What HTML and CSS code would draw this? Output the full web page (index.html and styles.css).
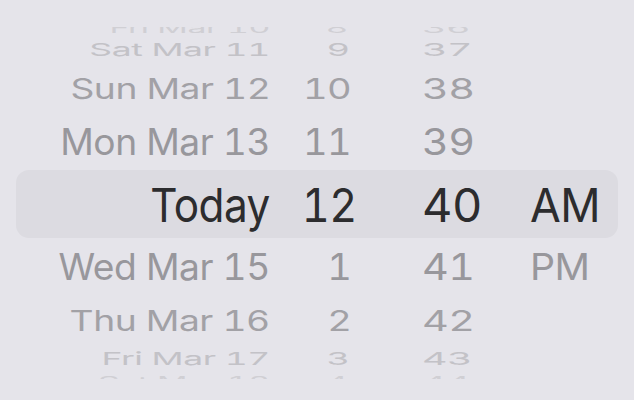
FILE: index.html
```html
<!DOCTYPE html>
<html lang="en">
<head>
    <meta charset="UTF-8">
    <meta name="viewport" content="width=device-width, initial-scale=1.0">
    <title>Date Picker</title>
    <link rel="stylesheet" href="styles.css">
</head>
<body>
    <div class="picker">
        <div class="wheel">
            <div class="row r4">
                <div class="cell date"><span>Fri Mar 10</span></div>
                <div class="cell hour"><span>8</span></div>
                <div class="cell minute"><span>36</span></div>
                <div class="cell period"></div>
            </div>
            <div class="row r3">
                <div class="cell date"><span>Sat Mar 11</span></div>
                <div class="cell hour"><span>9</span></div>
                <div class="cell minute"><span>37</span></div>
                <div class="cell period"></div>
            </div>
            <div class="row r2">
                <div class="cell date"><span>Sun Mar 12</span></div>
                <div class="cell hour"><span>10</span></div>
                <div class="cell minute"><span>38</span></div>
                <div class="cell period"></div>
            </div>
            <div class="row r1">
                <div class="cell date"><span>Mon Mar 13</span></div>
                <div class="cell hour"><span>11</span></div>
                <div class="cell minute"><span>39</span></div>
                <div class="cell period"></div>
            </div>
            <div class="row r0 selected">
                <div class="cell date"><span>Today</span></div>
                <div class="cell hour"><span>12</span></div>
                <div class="cell minute"><span>40</span></div>
                <div class="cell period"><span>AM</span></div>
            </div>
            <div class="row r1">
                <div class="cell date"><span>Wed Mar 15</span></div>
                <div class="cell hour"><span>1</span></div>
                <div class="cell minute"><span>41</span></div>
                <div class="cell period"><span>PM</span></div>
            </div>
            <div class="row r2">
                <div class="cell date"><span>Thu Mar 16</span></div>
                <div class="cell hour"><span>2</span></div>
                <div class="cell minute"><span>42</span></div>
                <div class="cell period"></div>
            </div>
            <div class="row r3">
                <div class="cell date"><span>Fri Mar 17</span></div>
                <div class="cell hour"><span>3</span></div>
                <div class="cell minute"><span>43</span></div>
                <div class="cell period"></div>
            </div>
            <div class="row r4">
                <div class="cell date"><span>Sat Mar 18</span></div>
                <div class="cell hour"><span>4</span></div>
                <div class="cell minute"><span>44</span></div>
                <div class="cell period"></div>
            </div>
        </div>
    </div>
</body>
</html>
```

FILE: styles.css
```css
html, body {
    margin: 0;
    padding: 0;
    background-color: #e5e4ea;
}
body {
    font-family: Inter, "Noto Sans", sans-serif;
    width: 634px;
    height: 400px;
    overflow: hidden;
}

/* visible window of the wheel */
.picker {
    padding-top: 27px;
}
.wheel {
    height: 352px;
    overflow: hidden;
}
.wheel > .row:first-child {
    margin-top: -9px;
}

.row {
    display: grid;
    grid-template-columns: 254px 87px 173px 1fr;
    grid-template-rows: minmax(0, 1fr);
    align-items: center;
    margin: 0 16px;
    font-size: 47px;
    line-height: 1;
    letter-spacing: -0.6px;
    font-variant-numeric: tabular-nums;
}
.cell {
    display: flex;
    white-space: nowrap;
}
.cell span {
    display: inline-block;
}
.date {
    justify-content: flex-end;
}
.date span {
    transform: scaleX(0.9);
    transform-origin: 100% 50%;
}
.hour {
    justify-content: flex-end;
}
.hour span {
    transform: scaleX(0.92);
    transform-origin: 100% 50%;
}
.minute {
    padding-left: 65px;
}
.period span {
    transform: scaleX(0.95);
    transform-origin: 0 50%;
}

.selected {
    height: 68px;
    background-color: #dcdbe1;
    border-radius: 13px;
    color: #2c2c2e;
}

/* rows turning away from the centre of the wheel */
.r1 { height: 57px; color: #98979c; }
.r2 { height: 50px; color: #a2a1a6; }
.r3 { height: 27px; color: #c3c2c7; }
.r4 { height: 18px; color: #d0cfd4; }

.r1 .cell { transform: scale(0.88, 0.77); }
.r2 .cell { transform: scale(0.88, 0.6); }
.r3 .cell { transform: scale(0.84, 0.38); }
.r4 .cell { transform: scale(0.8, 0.3); }

.date { transform-origin: 100% 50%; }
.hour { transform-origin: 41px 50%; }
.minute { transform-origin: 65px 50%; }
.period { transform-origin: 0 50%; }
```
